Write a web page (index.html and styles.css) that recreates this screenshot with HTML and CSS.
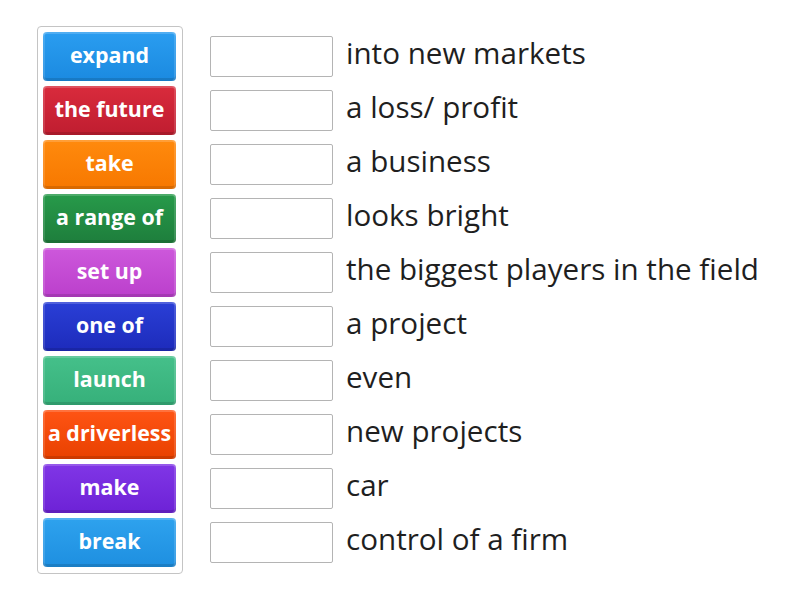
FILE: index.html
```html
<!DOCTYPE html>
<html>
<head>
<meta charset="utf-8">
<link rel="stylesheet" href="styles.css">
</head>
<body>
<div class="page">
  <div class="bank">
    <div class="tile c1">expand</div>
    <div class="tile c2">the future</div>
    <div class="tile c3">take</div>
    <div class="tile c4">a range of</div>
    <div class="tile c5">set up</div>
    <div class="tile c6">one of</div>
    <div class="tile c7">launch</div>
    <div class="tile c8">a driverless</div>
    <div class="tile c9">make</div>
    <div class="tile c10">break</div>
  </div>
  <div class="rows">
    <div class="row"><div class="slot"></div><span class="phrase">into new markets</span></div>
    <div class="row"><div class="slot"></div><span class="phrase">a loss/ profit</span></div>
    <div class="row"><div class="slot"></div><span class="phrase">a business</span></div>
    <div class="row"><div class="slot"></div><span class="phrase">looks bright</span></div>
    <div class="row"><div class="slot"></div><span class="phrase">the biggest players in the field</span></div>
    <div class="row"><div class="slot"></div><span class="phrase">a project</span></div>
    <div class="row"><div class="slot"></div><span class="phrase">even</span></div>
    <div class="row"><div class="slot"></div><span class="phrase">new projects</span></div>
    <div class="row"><div class="slot"></div><span class="phrase">car</span></div>
    <div class="row"><div class="slot"></div><span class="phrase">control of a firm</span></div>
  </div>
</div>
</body>
</html>
```

FILE: styles.css
```css
html, body {
  margin: 0;
  padding: 0;
  background: #ffffff;
  font-family: "Open Sans", "Noto Sans", sans-serif;
}

.page {
  display: flex;
  align-items: flex-start;
  padding: 26px 0 0 37px;
}

.bank {
  width: 134px;
  border: 1px solid #c4c4c4;
  border-radius: 4px;
  padding: 5px 5px 6px 5px;
  display: flex;
  flex-direction: column;
  gap: 5px;
}

.tile {
  height: 49px;
  box-sizing: border-box;
  padding-bottom: 5px;
  border-radius: 4px;
  width: 133px;
  display: flex;
  align-items: center;
  justify-content: center;
  color: #ffffff;
  font-weight: 700;
  font-size: 21.4px;
  white-space: nowrap;
  box-shadow: inset 0 2px 0 rgba(255,255,255,0.18), inset 2px 0 0 rgba(255,255,255,0.14), inset -2px 0 0 rgba(255,255,255,0.14), inset 0 -3px 0 rgba(0,0,0,0.12);
}

.c1 { background: linear-gradient(#2a9df0, #1b8ae0); }
.c2 { background: linear-gradient(#d92b3c, #bf1d30); }
.c3 { background: linear-gradient(#ff8a0d, #f77800); }
.c4 { background: linear-gradient(#279a4a, #1e7e3c); }
.c5 { background: linear-gradient(#cd58db, #bb3fcc); }
.c6 { background: linear-gradient(#2a3fd6, #1d2bbb); }
.c7 { background: linear-gradient(#45c08a, #36b07a); }
.c8 { background: linear-gradient(#ff5414, #e84100); }
.c9 { background: linear-gradient(#8036e6, #6d22d6); }
.c10 { background: linear-gradient(#2ea2ee, #1e8fe0); }

.rows {
  margin-left: 27px;
  padding-top: 6px;
  display: flex;
  flex-direction: column;
  gap: 5px;
}

.row {
  height: 49px;
  display: flex;
  align-items: center;
}

.slot {
  width: 121px;
  height: 39px;
  border: 1px solid #b4b4b4;
  border-radius: 2px;
  background: #fff;
  flex: none;
}

.phrase {
  margin-left: 13px;
  font-size: 29.6px;
  color: #1f1f1f;
  white-space: nowrap;
  position: relative;
  top: -4px;
}
```
